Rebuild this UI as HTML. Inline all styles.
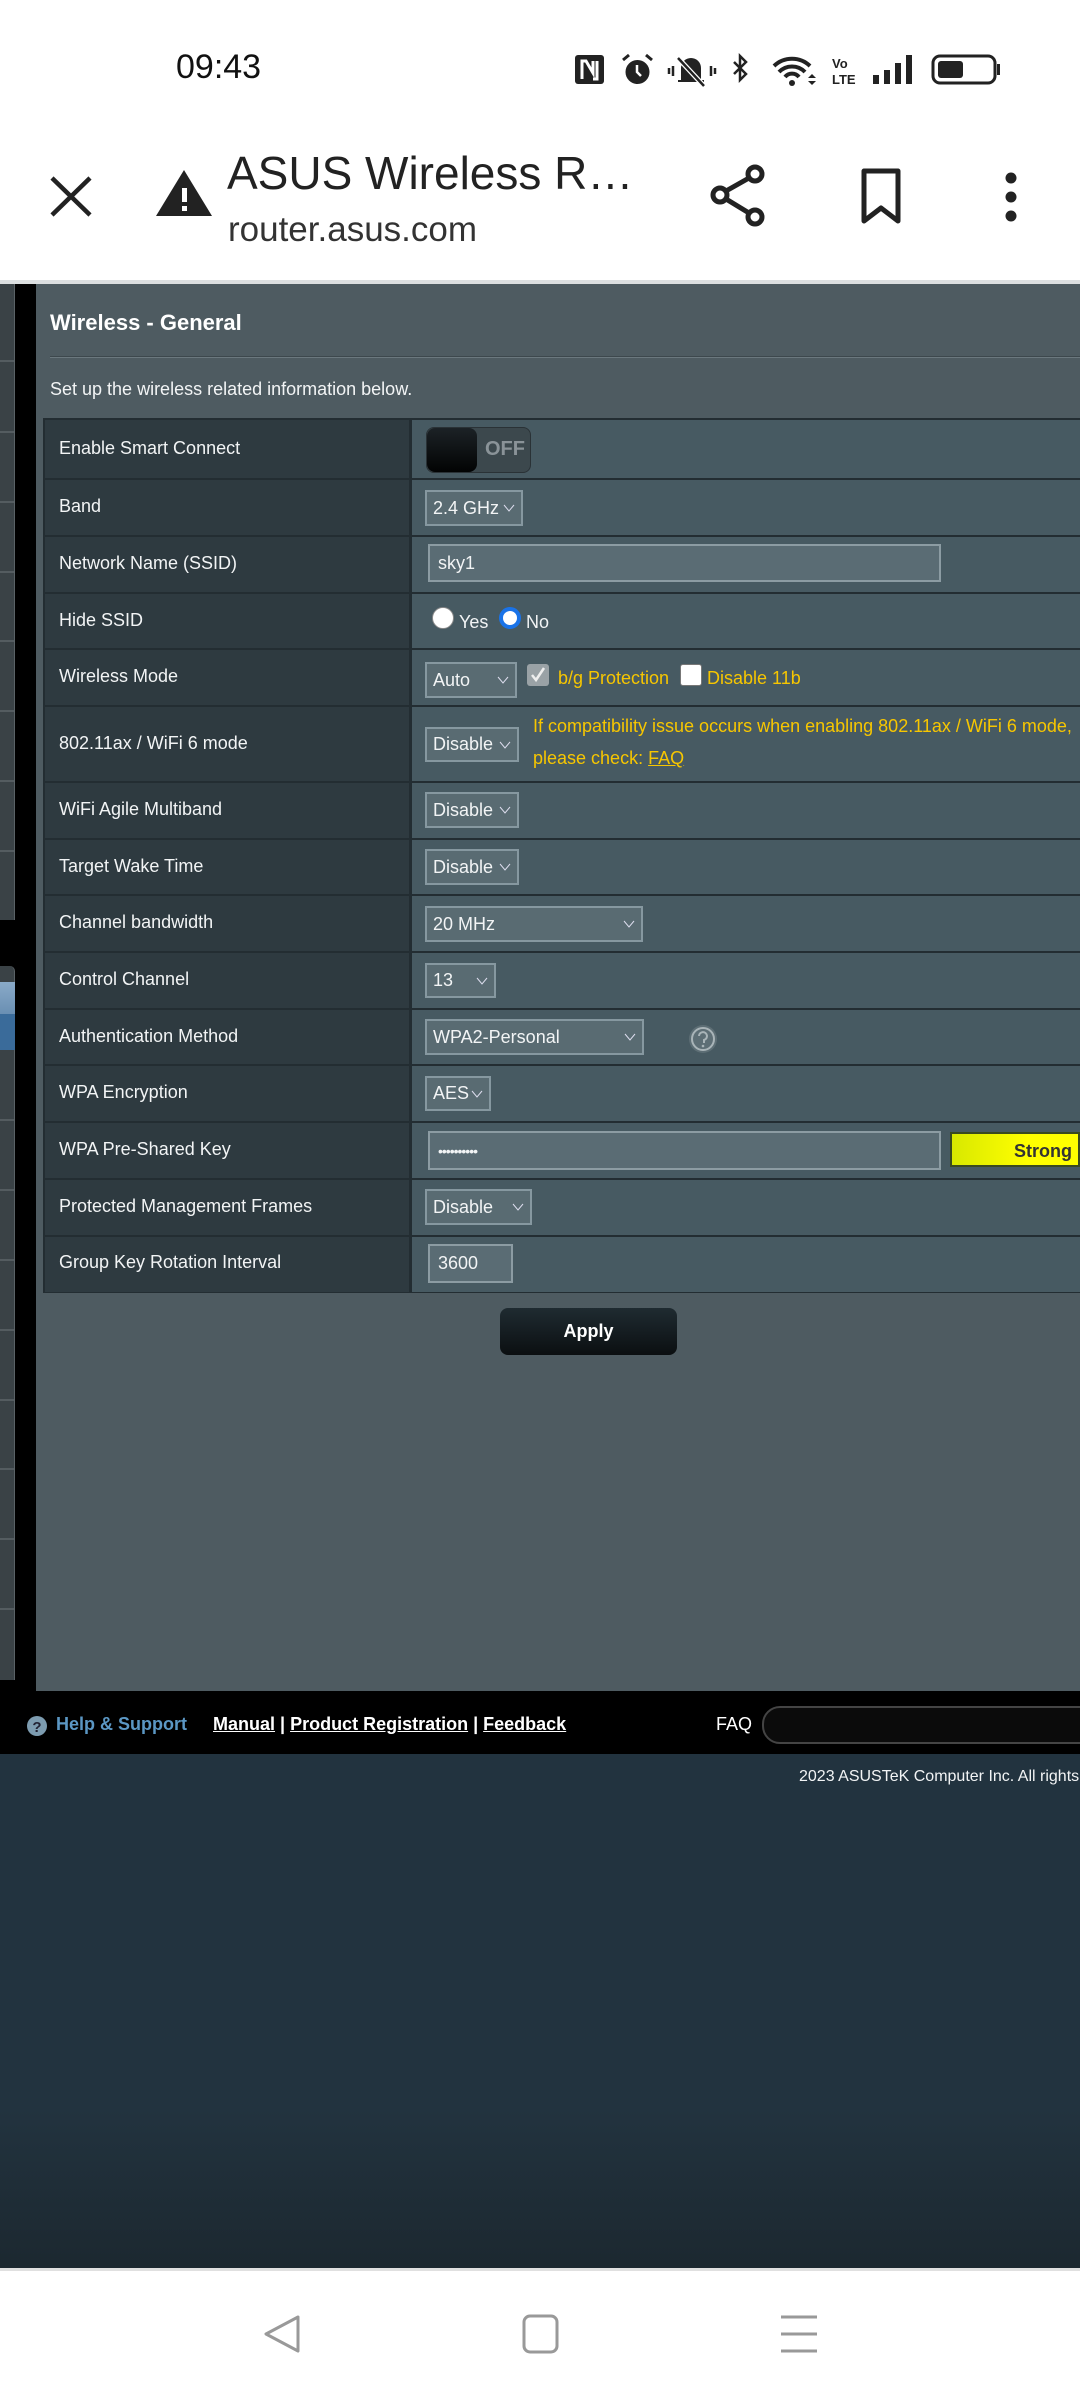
<!DOCTYPE html>
<html><head><meta charset="utf-8">
<style>
*{margin:0;padding:0;box-sizing:border-box}
body{width:1080px;height:2400px;position:relative;overflow:hidden;background:#fff;font-family:"Liberation Sans",sans-serif}
.a{position:absolute}
.lab{position:absolute;left:59px;color:#f2f4f5;font-size:18px;white-space:nowrap}
.sel{position:absolute;left:425px;background:#596b72;border:2px solid #8698a0;color:#f2f4f5;font-size:18px;padding-left:6px;display:flex;align-items:center}
.sel svg{position:absolute;right:6px;top:50%;margin-top:-4px}
.inp{position:absolute;left:428px;background:#5a6c74;border:2px solid #8c9ca3;color:#f2f4f5;font-size:18px;padding-left:8px;display:flex;align-items:center}
.y{color:#f7c600;font-size:18px}
</style></head><body>
<!-- status bar -->
<div class="a" style="left:176px;top:48px;font-size:34px;color:#111">09:43</div>
<svg class="a" style="left:570px;top:50px" width="440" height="40" viewBox="570 50 440 40">
<rect x="575" y="55" width="29" height="29" rx="3" fill="#222"/>
<path d="M582 79V61h4l7 12V61M597 61v18h-4" stroke="#fff" stroke-width="3" fill="none"/>
<circle cx="637.5" cy="72" r="12" fill="#222"/><path d="M637 65v7l4 4" stroke="#fff" stroke-width="2.5" fill="none"/>
<path d="M623 60l6-5M652 60l-6-5" stroke="#222" stroke-width="3"/>
<path d="M681 80v-12a10 10 0 0 1 20 0v12h3v2h-26v-2z" fill="#222"/><path d="M678 58l26 28" stroke="#fff" stroke-width="5"/><path d="M678 58l26 28" stroke="#222" stroke-width="2.5"/>
<path d="M669 68v6M673 66v10M711 66v10M715 68v6" stroke="#222" stroke-width="2.5"/>
<path d="M734 62l12 12-6 6V56l6 6-12 12" stroke="#222" stroke-width="2.5" fill="none"/>
<path d="M774 66a26 26 0 0 1 36 0M779 72a18 18 0 0 1 26 0M785 77a9 9 0 0 1 14 0" stroke="#222" stroke-width="4" fill="none"/><circle cx="792" cy="83" r="3" fill="#222"/>
<path d="M808 78l4-4 4 4zM808 81l4 4 4-4z" fill="#222"/>
<text x="832" y="68" font-size="13" font-weight="bold" fill="#222" font-family="Liberation Sans">Vo</text><text x="832" y="84" font-size="13" font-weight="bold" fill="#222" font-family="Liberation Sans">LTE</text>
<rect x="873" y="75" width="6" height="9" fill="#222"/><rect x="884" y="70" width="6" height="14" fill="#222"/><rect x="895" y="63" width="6" height="21" fill="#222"/><rect x="906" y="55" width="6" height="29" fill="#222"/>
<rect x="933" y="56" width="62" height="27" rx="7" stroke="#222" stroke-width="3" fill="none"/><rect x="938" y="61" width="25" height="17" rx="3" fill="#222"/><rect x="997" y="64" width="3" height="11" fill="#222"/>
</svg>
<!-- browser bar -->
<svg class="a" style="left:40px;top:165px" width="60" height="60"><path d="M12 13l38 37M50 13L12 50" stroke="#222" stroke-width="4.5"/></svg>
<svg class="a" style="left:155px;top:168px" width="60" height="50"><path d="M29 2L57 48H1z" fill="#222"/><rect x="27" y="20" width="5" height="14" fill="#fff"/><rect x="27" y="38" width="5" height="5" fill="#fff"/></svg>
<div class="a" style="left:227px;top:146px;font-size:46px;color:#222;white-space:nowrap">ASUS Wireless R…</div>
<div class="a" style="left:228px;top:210px;font-size:35px;color:#333">router.asus.com</div>
<svg class="a" style="left:705px;top:160px" width="70" height="72"><circle cx="50" cy="14" r="7" stroke="#222" stroke-width="5" fill="none"/><circle cx="15" cy="35" r="7" stroke="#222" stroke-width="5" fill="none"/><circle cx="50" cy="57" r="7" stroke="#222" stroke-width="5" fill="none"/><path d="M21 31l23-13M21 39l23 14" stroke="#222" stroke-width="5"/></svg>
<svg class="a" style="left:858px;top:168px" width="50" height="60"><path d="M6 3h34v50L23 40 6 53z" stroke="#222" stroke-width="5" fill="none" stroke-linejoin="round"/></svg>
<svg class="a" style="left:1000px;top:170px" width="22" height="54"><circle cx="11" cy="8" r="5.5" fill="#222"/><circle cx="11" cy="27" r="5.5" fill="#222"/><circle cx="11" cy="46" r="5.5" fill="#222"/></svg>
<!-- page -->
<div class="a" style="left:0;top:280px;width:1080px;height:4px;background:#dcdfe0"></div>
<div class="a" style="left:0;top:284px;width:1080px;height:1984px;background:linear-gradient(#22323e,#22333f 92%,#1c2830)"></div>
<div class="a" style="left:0;top:284px;width:36px;height:1407px;background:#000"></div>
<div class="a" style="left:0;top:284px;width:15px;height:636px;background:#3a4246;border-right:1px solid #5a6266"></div>
<div class="a" style="left:0;top:966px;width:15px;height:714px;background:#3a4246;border-right:1px solid #5a6266;border-top-right-radius:5px"></div>
<div class="a" style="left:0;top:982px;width:15px;height:32px;background:linear-gradient(#8aaac8,#6a8fb3)"></div>
<div class="a" style="left:0;top:1014px;width:15px;height:36px;background:#3a6b9a"></div>
<svg class="a" style="left:0;top:0" width="15" height="1700"><g stroke="#5c6468" stroke-width="1.5"><path d="M0 361h15M0 432h15M0 502h15M0 572h15M0 641h15M0 711h15M0 781h15M0 851h15M0 1120h15M0 1190h15M0 1260h15M0 1330h15M0 1400h15M0 1469h15M0 1539h15M0 1609h15"/></g></svg>
<div class="a" style="left:36px;top:284px;width:1044px;height:1407px;background:#4e5b61"></div>
<div class="a" style="left:50px;top:310px;font-size:22px;font-weight:bold;color:#fff">Wireless - General</div>
<div class="a" style="left:50px;top:356px;width:1030px;height:2px;background:#6b787e;border-top:1px solid #3d484d"></div>
<div class="a" style="left:50px;top:379px;font-size:18px;color:#f2f4f5">Set up the wireless related information below.</div>
<!-- table -->
<div class="a" style="left:43px;top:418px;width:1037px;height:875px;background:#232d32"></div>
<svg class="a" style="left:43px;top:418px" width="1037" height="875">
<g fill="#2e3a40">
<rect x="2" y="2" width="364" height="58"/><rect x="2" y="62" width="364" height="55"/><rect x="2" y="119" width="364" height="55"/><rect x="2" y="176" width="364" height="54"/><rect x="2" y="232" width="364" height="55"/><rect x="2" y="289" width="364" height="74"/><rect x="2" y="365" width="364" height="55"/><rect x="2" y="422" width="364" height="54"/><rect x="2" y="478" width="364" height="55"/><rect x="2" y="535" width="364" height="55"/><rect x="2" y="592" width="364" height="54"/><rect x="2" y="648" width="364" height="55"/><rect x="2" y="705" width="364" height="55"/><rect x="2" y="762" width="364" height="55"/><rect x="2" y="819" width="364" height="55"/>
</g>
<g fill="#475a62">
<rect x="369" y="2" width="668" height="58"/><rect x="369" y="62" width="668" height="55"/><rect x="369" y="119" width="668" height="55"/><rect x="369" y="176" width="668" height="54"/><rect x="369" y="232" width="668" height="55"/><rect x="369" y="289" width="668" height="74"/><rect x="369" y="365" width="668" height="55"/><rect x="369" y="422" width="668" height="54"/><rect x="369" y="478" width="668" height="55"/><rect x="369" y="535" width="668" height="55"/><rect x="369" y="592" width="668" height="54"/><rect x="369" y="648" width="668" height="55"/><rect x="369" y="705" width="668" height="55"/><rect x="369" y="762" width="668" height="55"/><rect x="369" y="819" width="668" height="55"/>
</g></svg>
<div class="lab" style="top:438px">Enable Smart Connect</div>
<div class="lab" style="top:496px">Band</div>
<div class="lab" style="top:553px">Network Name (SSID)</div>
<div class="lab" style="top:610px">Hide SSID</div>
<div class="lab" style="top:666px">Wireless Mode</div>
<div class="lab" style="top:733px">802.11ax / WiFi 6 mode</div>
<div class="lab" style="top:799px">WiFi Agile Multiband</div>
<div class="lab" style="top:856px">Target Wake Time</div>
<div class="lab" style="top:912px">Channel bandwidth</div>
<div class="lab" style="top:969px">Control Channel</div>
<div class="lab" style="top:1026px">Authentication Method</div>
<div class="lab" style="top:1082px">WPA Encryption</div>
<div class="lab" style="top:1139px">WPA Pre-Shared Key</div>
<div class="lab" style="top:1196px">Protected Management Frames</div>
<div class="lab" style="top:1252px">Group Key Rotation Interval</div>
<!-- toggle -->
<div class="a" style="left:426px;top:427px;width:105px;height:46px;border-radius:8px;background:#3c484d;border:1px solid #2a3236"></div>
<div class="a" style="left:427px;top:428px;width:50px;height:44px;border-radius:8px;background:linear-gradient(#1c2226,#020303)"></div>
<div class="a" style="left:485px;top:438px;font-size:20px;font-weight:bold;color:#8a9398">OFF</div>
<!-- controls -->
<div class="sel" style="top:490px;width:98px;height:36px">2.4 GHz<svg width="12" height="8"><path d="M1 1l5 6 5-6" stroke="#dde" fill="none"/></svg></div>
<div class="inp" style="top:544px;width:513px;height:38px">sky1</div>
<div class="a" style="left:432px;top:607px;width:22px;height:22px;border-radius:50%;background:#fff;border:1px solid #888"></div>
<div class="a" style="left:459px;top:612px;font-size:18px;color:#f2f4f5">Yes</div>
<div class="a" style="left:499px;top:607px;width:22px;height:22px;border-radius:50%;background:#fff;border:4px solid #1a73e8"></div>
<div class="a" style="left:526px;top:612px;font-size:18px;color:#f2f4f5">No</div>
<div class="sel" style="top:662px;width:92px;height:36px">Auto<svg width="12" height="8"><path d="M1 1l5 6 5-6" stroke="#dde" fill="none"/></svg></div>
<div class="a" style="left:527px;top:664px;width:22px;height:22px;border-radius:3px;background:#9aa2a6"><svg width="22" height="22"><path d="M5 11l4 5 8-12" stroke="#eee" stroke-width="2.5" fill="none"/></svg></div>
<div class="a y" style="left:558px;top:668px">b/g Protection</div>
<div class="a" style="left:680px;top:664px;width:22px;height:22px;border-radius:3px;background:#fff;border:1px solid #777"></div>
<div class="a y" style="left:707px;top:668px">Disable 11b</div>
<div class="sel" style="top:727px;width:94px;height:35px">Disable<svg width="12" height="8"><path d="M1 1l5 6 5-6" stroke="#dde" fill="none"/></svg></div>
<div class="a y" style="left:533px;top:716px;white-space:nowrap">If compatibility issue occurs when enabling 802.11ax / WiFi 6 mode,</div>
<div class="a y" style="left:533px;top:748px">please check: <span style="text-decoration:underline">FAQ</span></div>
<div class="sel" style="top:792px;width:94px;height:36px">Disable<svg width="12" height="8"><path d="M1 1l5 6 5-6" stroke="#dde" fill="none"/></svg></div>
<div class="sel" style="top:849px;width:94px;height:36px">Disable<svg width="12" height="8"><path d="M1 1l5 6 5-6" stroke="#dde" fill="none"/></svg></div>
<div class="sel" style="top:906px;width:218px;height:36px">20 MHz<svg width="12" height="8"><path d="M1 1l5 6 5-6" stroke="#dde" fill="none"/></svg></div>
<div class="sel" style="top:963px;width:71px;height:35px">13<svg width="12" height="8"><path d="M1 1l5 6 5-6" stroke="#dde" fill="none"/></svg></div>
<div class="sel" style="top:1019px;width:219px;height:36px">WPA2-Personal<svg width="12" height="8"><path d="M1 1l5 6 5-6" stroke="#dde" fill="none"/></svg></div>
<svg class="a" style="left:687px;top:1023px" width="32" height="32"><circle cx="16" cy="16" r="14" fill="#5d6e75"/><circle cx="16" cy="16" r="11" stroke="#a9b4b8" stroke-width="2" fill="none"/><path d="M12 13a4 4 0 1 1 5 4v3" stroke="#a9b4b8" stroke-width="2" fill="none"/><circle cx="16" cy="23" r="1.3" fill="#a9b4b8"/></svg>
<div class="sel" style="top:1076px;width:66px;height:35px">AES<svg width="12" height="8"><path d="M1 1l5 6 5-6" stroke="#dde" fill="none"/></svg></div>
<div class="inp" style="top:1131px;width:513px;height:39px;font-size:14px;letter-spacing:-1px">••••••••••</div>
<div class="a" style="left:950px;top:1132px;width:130px;height:35px;background:linear-gradient(90deg,#d8e800,#ffff00 60%);border:2px solid #3a4a20;color:#333;font-size:18px;font-weight:bold;padding:7px 0 0 62px">Strong</div>
<div class="sel" style="top:1189px;width:107px;height:36px">Disable<svg width="12" height="8"><path d="M1 1l5 6 5-6" stroke="#dde" fill="none"/></svg></div>
<div class="inp" style="top:1244px;width:85px;height:39px">3600</div>
<div class="a" style="left:500px;top:1308px;width:177px;height:47px;border-radius:8px;background:linear-gradient(#1f2b31,#0b0f11);color:#fff;font-weight:bold;font-size:18px;text-align:center;line-height:47px">Apply</div>
<!-- footer -->
<div class="a" style="left:0;top:1691px;width:1080px;height:63px;background:#000"></div>
<svg class="a" style="left:26px;top:1715px" width="22" height="22"><circle cx="11" cy="11" r="10" fill="#7d9cb0"/><text x="11" y="17" font-size="15" font-weight="bold" fill="#223" text-anchor="middle" font-family="Liberation Sans">?</text></svg>
<div class="a" style="left:56px;top:1714px;font-size:18px;font-weight:bold;color:#5b97c4">Help &amp; Support</div>
<div class="a" style="left:213px;top:1714px;font-size:18px;font-weight:bold;color:#fff;white-space:nowrap"><u>Manual</u> | <u>Product Registration</u> | <u>Feedback</u></div>
<div class="a" style="left:716px;top:1714px;font-size:18px;color:#fff">FAQ</div>
<div class="a" style="left:762px;top:1706px;width:340px;height:38px;border-radius:18px;border:2px solid #444;background:#0b0b0b"></div>
<div class="a" style="left:799px;top:1768px;font-size:16px;color:#f2f4f5;white-space:nowrap">2023 ASUSTeK Computer Inc. All rights</div>
<!-- nav -->
<div class="a" style="left:0;top:2268px;width:1080px;height:3px;background:#e0e0e0"></div>
<svg class="a" style="left:0;top:2290px" width="1080" height="90">
<path d="M298 27L266 44l32 17z" stroke="#999" stroke-width="3" fill="none" stroke-linejoin="round"/>
<rect x="524" y="26" width="33" height="36" rx="6" stroke="#999" stroke-width="3" fill="none"/>
<path d="M781 27h36M781 44h36M781 61h36" stroke="#999" stroke-width="3"/>
</svg>
</body></html>
